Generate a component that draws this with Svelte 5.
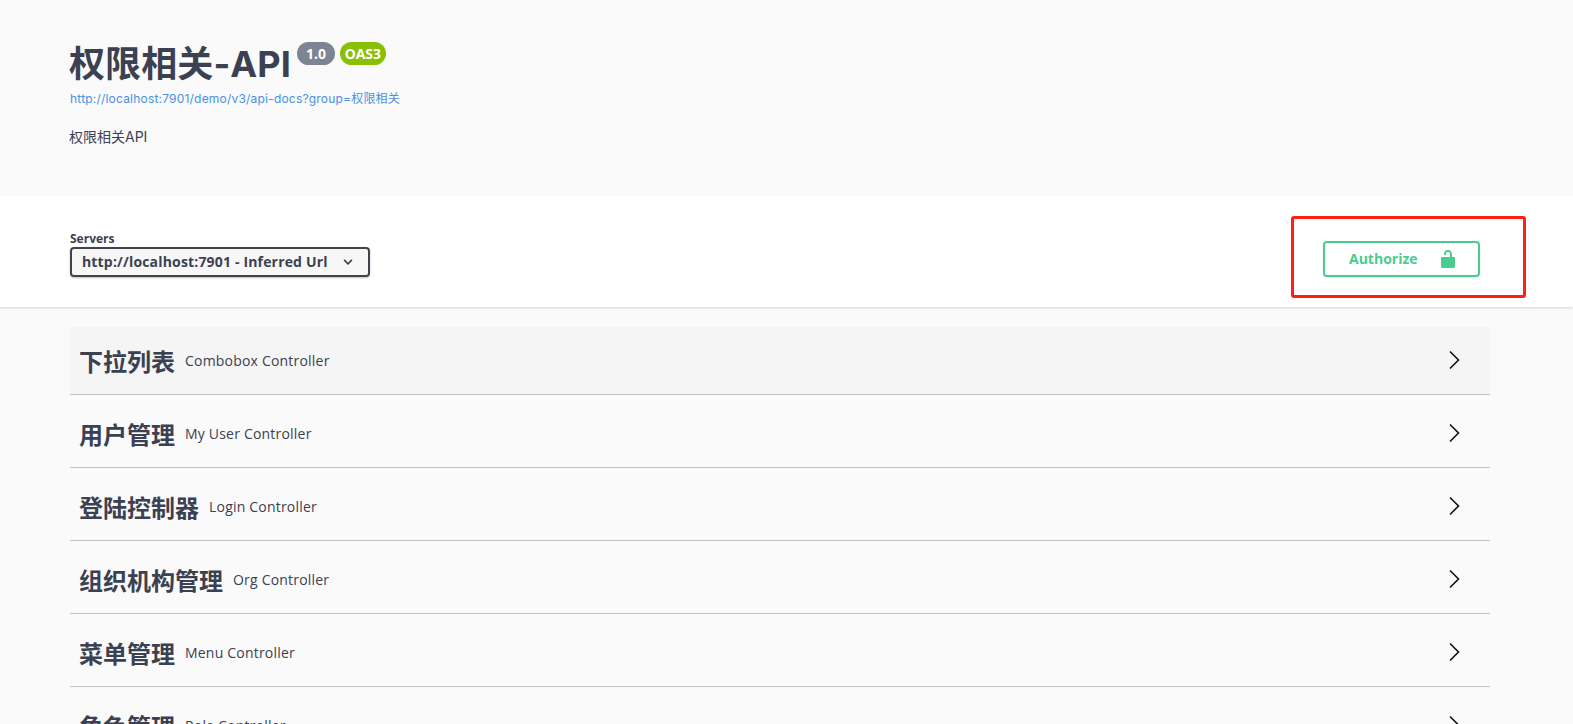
<script lang="ts">
  // Swagger UI style API docs page: info header, server bar, collapsed tag list
  const tags = [
    { name: '下拉列表', desc: 'Combobox Controller', hover: true },
    { name: '用户管理', desc: 'My User Controller' },
    { name: '登陆控制器', desc: 'Login Controller' },
    { name: '组织机构管理', desc: 'Org Controller' },
    { name: '菜单管理', desc: 'Menu Controller' },
    { name: '角色管理', desc: 'Role Controller' }
  ];
</script>

<div class="page">
  <section class="info">
    <div class="title-row">
      <h1>权限相关-API</h1>
      <span class="badge version">1.0</span>
      <span class="badge oas">OAS3</span>
    </div>
    <a class="url" href="#docs">http://localhost:7901/demo/v3/api-docs?group=权限相关</a>
    <p class="desc">权限相关API</p>
  </section>

  <section class="schemes">
    <div class="servers">
      <span class="servers-label">Servers</span>
      <div class="select">
        <span class="select-text">http://localhost:7901 - Inferred Url</span>
        <svg width="12" height="12" viewBox="0 0 20 20" aria-hidden="true">
          <path d="M3.5 6.5 10 13l6.5-6.5" fill="none" stroke="#3b4151" stroke-width="2.8" />
        </svg>
      </div>
    </div>
    <div class="auth-wrap">
      <button type="button" class="authorize">
        <span class="auth-text">Authorize</span>
        <svg width="20" height="20" viewBox="0 0 20 20" aria-hidden="true">
          <path
            d="M15.8 8H14V5.6C14 2.7 12.7 1 10 1S6 2.7 6 5.6V6h2v-.9C8 3.6 8.6 3 10 3s2 .6 2 2.1V8H4.2C3.5 8 3 8.5 3 9.2v8.6c0 .7.5 1.2 1.2 1.2h11.6c.7 0 1.2-.5 1.2-1.2V9.2c0-.7-.5-1.2-1.2-1.2z"
            fill="#49cc90"
          />
        </svg>
      </button>
    </div>
  </section>

  <section class="tags">
    {#each tags as tag (tag.name)}
      <div class="tag" class:hover={tag.hover}>
        <span class="tag-name">{tag.name}</span>
        <span class="tag-desc">{tag.desc}</span>
        <svg class="arrow" width="20" height="20" viewBox="0 0 20 20" aria-hidden="true">
          <path d="M6 1.5 14.5 10 6 18.5" fill="none" stroke="#111" stroke-width="1.6" />
        </svg>
      </div>
    {/each}
  </section>

  <div class="annotation"></div>
</div>

<style>
  :global(body) {
    margin: 0;
    background: #fafafa;
    overflow: hidden;
  }
  .page {
    position: relative;
    height: 724px;
    overflow: hidden;
    color: #3b4151;
    font-family: 'Open Sans', 'Noto Sans CJK SC', sans-serif;
  }
  .info {
    box-sizing: border-box;
    height: 196px;
    padding: 41px 0 0 69px;
  }
  .title-row {
    display: flex;
    align-items: flex-start;
    height: 46px;
  }
  h1 {
    margin: 0;
    font-size: 36px;
    line-height: 46px;
    font-weight: 700;
    letter-spacing: 0.1px;
    font-family: Inter, 'Noto Sans CJK SC', sans-serif;
  }
  .badge {
    box-sizing: border-box;
    height: 23px;
    border-radius: 12px;
    margin-top: 1px;
    color: #fff;
    font-size: 14px;
    line-height: 23px;
    font-weight: 700;
    font-family: 'Noto Sans', sans-serif;
    text-align: center;
  }
  .version {
    width: 38px;
    margin-left: 6px;
    background: #7d8492;
  }
  .oas {
    width: 46px;
    margin-left: 5px;
    background: #89bf04;
  }
  .url {
    display: block;
    margin: 3px 0 0 1px;
    color: #4990e2;
    font-size: 12px;
    line-height: 17px;
    letter-spacing: 0.2px;
    text-decoration: none;
    font-family: Inter, 'Noto Sans CJK SC', sans-serif;
  }
  .desc {
    margin: 20px 0 0;
    font-size: 14px;
    line-height: 20px;
    font-family: Inter, 'Noto Sans CJK SC', sans-serif;
  }
  .schemes {
    box-sizing: border-box;
    height: 111px;
    padding: 0 93px 0 70px;
    display: flex;
    justify-content: space-between;
    align-items: flex-start;
    background: #fff;
    box-shadow: 0 1px 2px 0 rgba(0, 0, 0, 0.15);
  }
  .servers {
    display: flex;
    flex-direction: column;
    padding-top: 35px;
  }
  .servers-label {
    font-size: 12px;
    line-height: 15px;
    font-weight: 700;
  }
  .select {
    box-sizing: border-box;
    width: 300px;
    height: 30px;
    margin-top: 1px;
    display: flex;
    align-items: center;
    justify-content: space-between;
    padding: 0 14px 0 10px;
    background: #f7f7f7;
    border: 2px solid #41444e;
    border-radius: 4px;
    box-shadow: 0 1px 2px 0 rgba(0, 0, 0, 0.25);
    font-size: 14px;
    font-weight: 700;
    letter-spacing: 0.17px;
  }
  .select-text {
    padding-bottom: 2px;
  }
  .auth-wrap {
    padding-top: 45px;
  }
  .authorize {
    box-sizing: border-box;
    width: 157px;
    height: 36px;
    display: flex;
    align-items: center;
    gap: 20px;
    padding: 0 0 0 24px;
    background: transparent;
    border: 2px solid #49cc90;
    border-radius: 4px;
    box-shadow: 0 1px 2px rgba(0, 0, 0, 0.1);
    color: #49cc90;
    font-family: inherit;
    font-size: 14px;
    font-weight: 700;
  }
  .auth-text {
    padding-bottom: 2px;
  }
  .tags {
    margin: 20px 0 0 70px;
    width: 1420px;
  }
  .tag {
    box-sizing: border-box;
    height: 68px;
    margin-bottom: 5px;
    display: flex;
    align-items: center;
    padding: 0 26px 0 9px;
    border-bottom: 1px solid rgba(59, 65, 81, 0.3);
  }
  .tag.hover {
    background: rgba(0, 0, 0, 0.02);
  }
  .tag-name {
    font-size: 24px;
    font-weight: 700;
    line-height: 34px;
    font-family: 'Noto Sans CJK SC', sans-serif;
  }
  .tag-desc {
    margin-left: 10px;
    font-size: 14px;
    line-height: 20px;
    letter-spacing: 0.2px;
  }
  .arrow {
    margin-left: auto;
    margin-bottom: 2px;
  }
  /* red highlight drawn over the screenshot */
  .annotation {
    position: absolute;
    left: 1291px;
    top: 216px;
    width: 235px;
    height: 82px;
    box-sizing: border-box;
    border: 3px solid #ff1f14;
    border-radius: 3px;
  }
</style>
